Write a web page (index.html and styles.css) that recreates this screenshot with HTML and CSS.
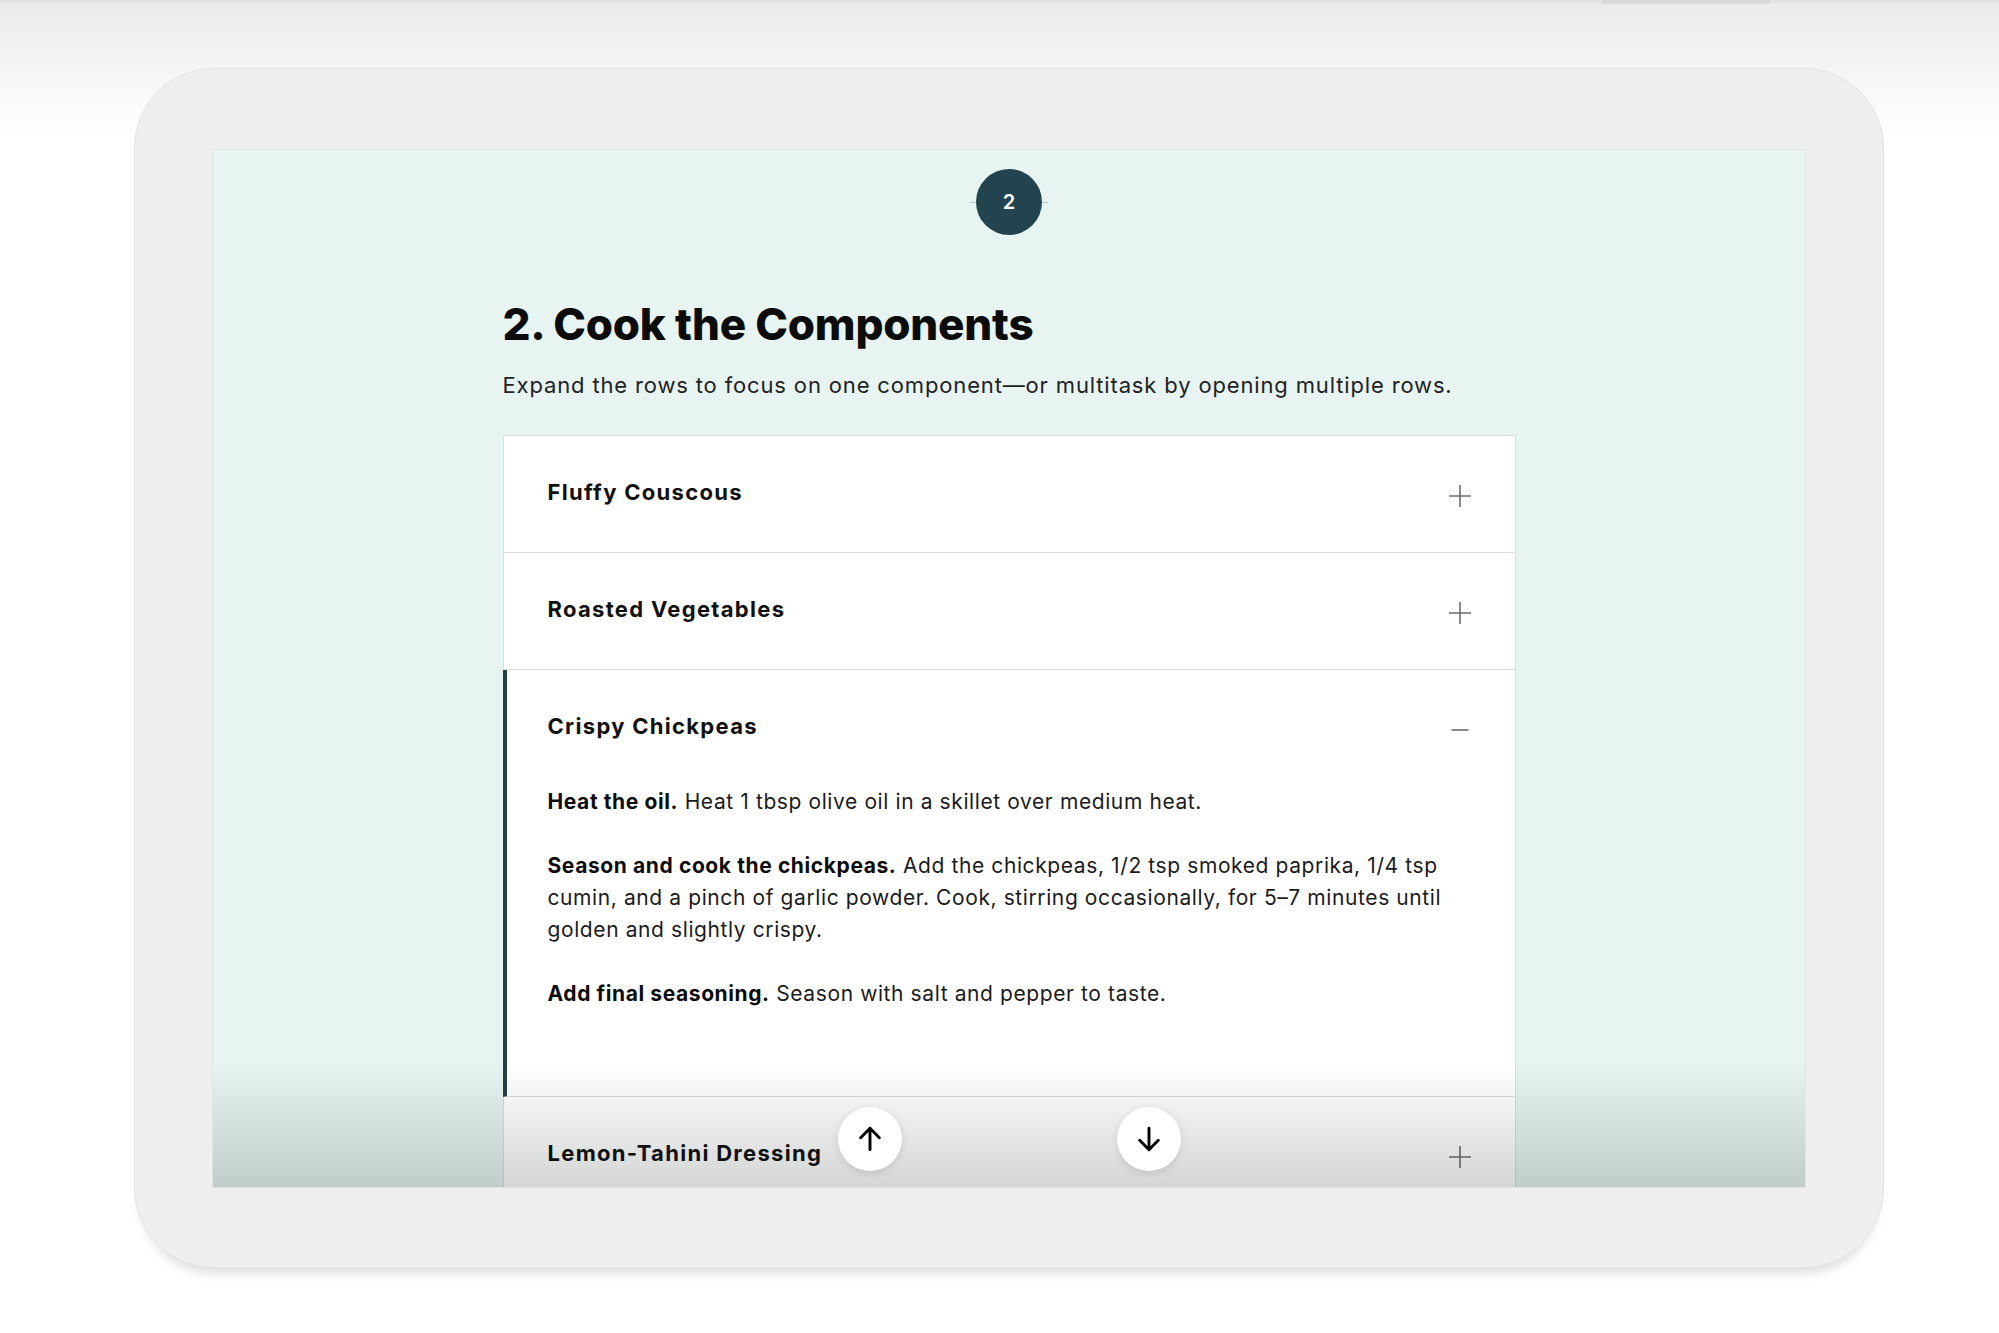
FILE: index.html
```html
<!DOCTYPE html>
<html lang="en">
<head>
    <meta charset="UTF-8">
    <meta name="viewport" content="width=device-width, initial-scale=1.0">
    <title>Cook the Components</title>
    <link rel="stylesheet" href="styles.css">
</head>
<body>
    <div class="topbar"><span class="topbar-mark"></span></div>

    <div class="device">
        <div class="screen">
            <div class="step">
                <span class="step-line"></span>
                <span class="step-num">2</span>
                <span class="step-line"></span>
            </div>

            <section class="section">
                <h1>2. Cook the Components</h1>
                <p class="lead">Expand the rows to focus on one component—or multitask by opening multiple rows.</p>

                <div class="accordion">
                    <div class="row">
                        <div class="row-head">
                            <h2>Fluffy Couscous</h2>
                            <svg class="toggle" viewBox="0 0 24 24"><path d="M12 1v22M1 12h22"/></svg>
                        </div>
                    </div>
                    <div class="row">
                        <div class="row-head">
                            <h2>Roasted Vegetables</h2>
                            <svg class="toggle" viewBox="0 0 24 24"><path d="M12 1v22M1 12h22"/></svg>
                        </div>
                    </div>
                    <div class="row open">
                        <div class="row-head">
                            <h2>Crispy Chickpeas</h2>
                            <svg class="toggle" viewBox="0 0 24 24"><path d="M3.5 12h17"/></svg>
                        </div>
                        <div class="row-body">
                            <p><b>Heat the oil.</b> Heat 1 tbsp olive oil in a skillet over medium heat.</p>
                            <p><b>Season and cook the chickpeas.</b> Add the chickpeas, 1/2 tsp smoked paprika, 1/4 tsp cumin, and a pinch of garlic powder. Cook, stirring occasionally, for 5–7 minutes until golden and slightly crispy.</p>
                            <p><b>Add final seasoning.</b> Season with salt and pepper to taste.</p>
                        </div>
                    </div>
                    <div class="row">
                        <div class="row-head">
                            <h2>Lemon-Tahini Dressing</h2>
                            <svg class="toggle" viewBox="0 0 24 24"><path d="M12 1v22M1 12h22"/></svg>
                        </div>
                    </div>
                </div>
            </section>

            <div class="fade"></div>

            <button class="nav-btn nav-up" aria-label="Previous">
                <svg viewBox="0 0 24 24"><path d="M12 20V4M5 11l7-7 7 7"/></svg>
            </button>
            <button class="nav-btn nav-down" aria-label="Next">
                <svg viewBox="0 0 24 24"><path d="M12 4v16M5 13l7 7 7-7"/></svg>
            </button>
        </div>
    </div>
</body>
</html>
```

FILE: styles.css
```css
body {
    margin: 0;
    min-height: 1333px;
    background: linear-gradient(#ebebeb 3px, #ffffff 135px) no-repeat;
    font-family: Inter, "Noto Sans", sans-serif;
    color: #141414;
}

.topbar {
    display: flex;
    height: 3px;
    background-color: #e4e4e4;
}
.topbar-mark {
    margin-left: 1602px;
    width: 168px;
    height: 4px;
    background-color: #d9d9d9;
}

.device {
    box-sizing: border-box;
    width: 1750px;
    height: 1200px;
    margin: 65px 0 0 134px;
    padding: 80px 77px 79px 77px;
    background-color: #efefef;
    border: 1px solid #e3e3e3;
    border-radius: 80px;
    box-shadow: 0 12px 10px -6px rgba(0, 0, 0, 0.12);
}

.screen {
    position: relative;
    box-sizing: border-box;
    width: 1594px;
    height: 1039px;
    padding-top: 19px;
    background-color: #e8f4f2;
    border: 1px solid #e0e4e3;
    overflow: hidden;
}

.step {
    display: flex;
    justify-content: center;
    align-items: center;
}
.step-line {
    width: 6px;
    height: 1px;
    background-color: #b9c2c0;
}
.step-num {
    width: 66px;
    height: 66px;
    border-radius: 50%;
    background-color: #23434f;
    color: #fff;
    font-size: 20px;
    font-weight: 600;
    display: flex;
    justify-content: center;
    align-items: center;
}

.section {
    width: 1013px;
    margin: 0 auto;
}

h1 {
    margin: 64px 0 0 0;
    font-size: 44px;
    line-height: 50px;
    font-weight: 800;
    letter-spacing: -0.2px;
    color: #0c0c0c;
}

.lead {
    margin: 21px 0 0 0;
    font-size: 22px;
    line-height: 31px;
    letter-spacing: 0.85px;
    color: #222;
}

.accordion {
    margin-top: 34px;
    background-color: #fff;
    border: 1px solid #dcdcdc;
    border-bottom: none;
}

.row {
    border-bottom: 1px solid #dcdcdc;
}
.row.open {
    margin-left: -1px;
    border-left: 4px solid #22404b;
}

.row-head {
    height: 116px;
    padding: 0 43px 0 44px;
    display: flex;
    align-items: center;
    justify-content: space-between;
}
.row.open .row-head {
    padding-left: 41px;
}

h2 {
    margin: 0 0 5px 0;
    font-size: 22px;
    font-weight: 700;
    letter-spacing: 1.3px;
    color: #111;
}

.toggle {
    width: 24px;
    height: 24px;
    margin-top: 4px;
    fill: none;
    stroke: #6e6e6e;
    stroke-width: 1.6;
}

.row-body {
    padding: 0 45px 86px 41px;
}
.row-body p {
    margin: 0 0 32px 0;
    font-size: 21px;
    line-height: 32px;
    letter-spacing: 0.6px;
    color: #1b1b1b;
}
.row-body p:last-child {
    margin-bottom: 0;
}
.row-body b {
    font-weight: 700;
    color: #0c0c0c;
}

.fade {
    position: absolute;
    left: 0;
    right: 0;
    bottom: 0;
    height: 125px;
    background: linear-gradient(rgba(0, 12, 8, 0), rgba(0, 12, 8, 0.17));
}

.nav-btn {
    position: absolute;
    top: 957px;
    width: 64px;
    height: 64px;
    padding: 0;
    border: none;
    border-radius: 50%;
    background-color: #fff;
    box-shadow: 0 2px 8px rgba(0, 0, 0, 0.12);
    display: flex;
    justify-content: center;
    align-items: center;
    cursor: pointer;
}
.nav-btn svg {
    width: 32px;
    height: 32px;
    fill: none;
    stroke: #000;
    stroke-width: 2.2;
    stroke-linecap: round;
    stroke-linejoin: round;
}
.nav-up {
    left: 625px;
}
.nav-down {
    left: 904px;
}
```
